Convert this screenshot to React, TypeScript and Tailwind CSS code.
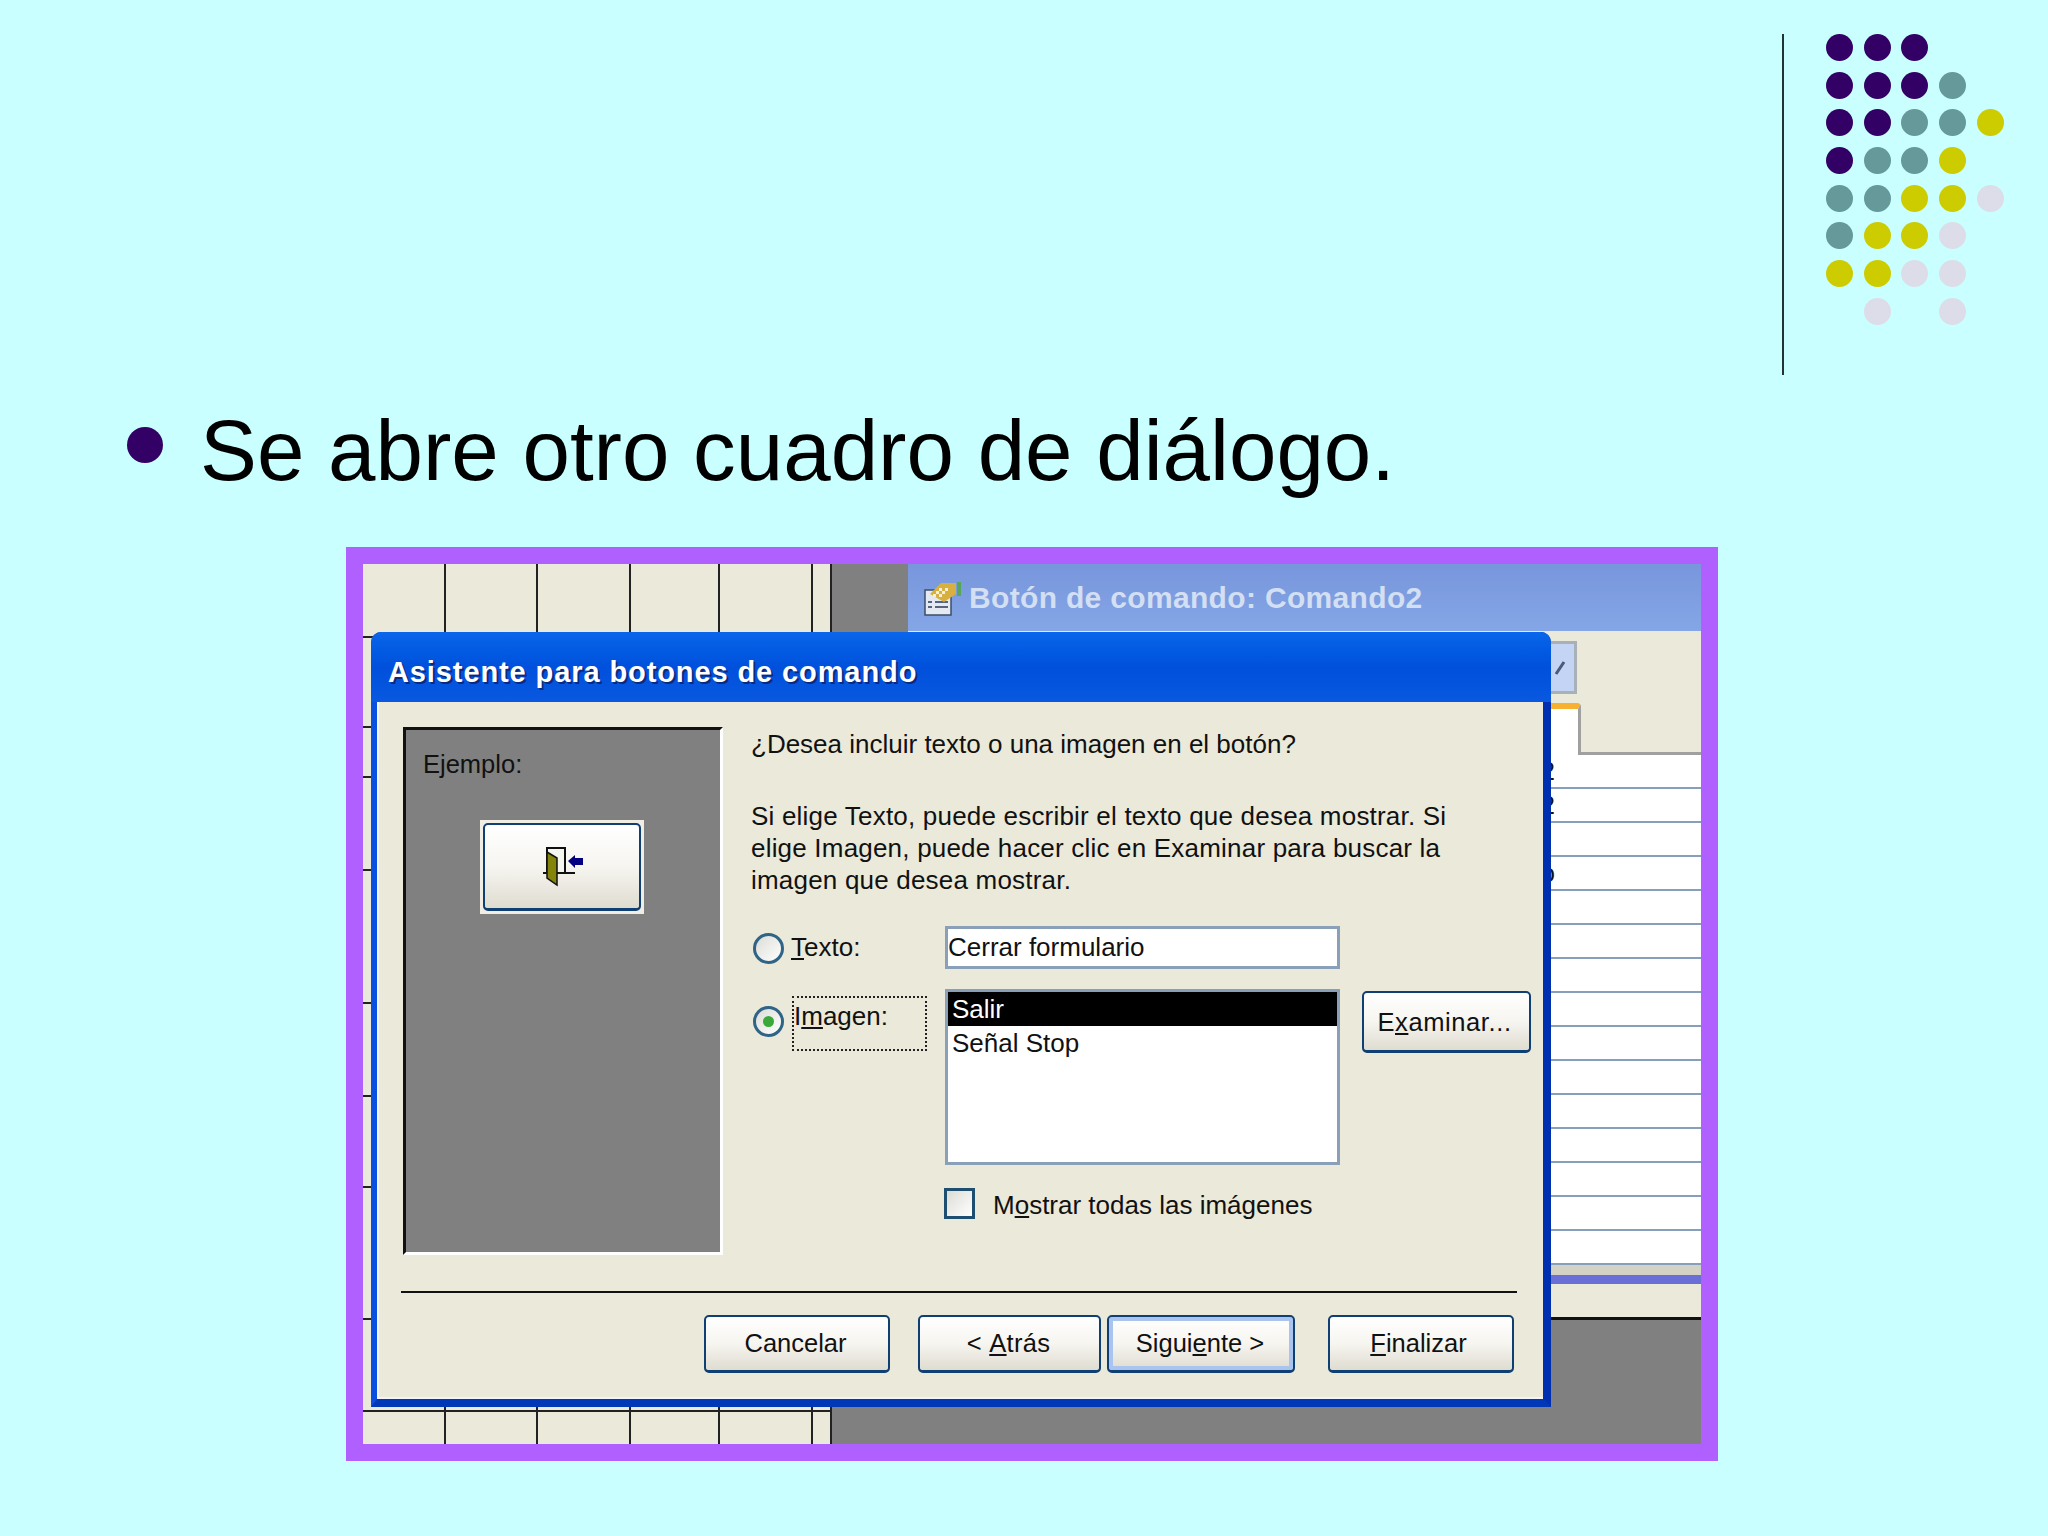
const dotColors: Record<string, string> = {
  p: 'bg-[#330066]',
  t: 'bg-[#669999]',
  y: 'bg-[#cccc00]',
  l: 'bg-[#dddde9]',
};

const dotRows = ['ppp..', 'pppt.', 'pptty', 'ptty.', 'ttyyl', 'tyyl.', 'yyll.', '.l.l.'];

const tableCols = ['w-[83px]', 'w-[92px]', 'w-[93px]', 'w-[89px]', 'w-[93px]', 'w-[19px]'];
const tableRows = ['h-[74px]', 'h-[90px]', 'h-[50px]', 'h-[93px]', 'h-[133px]', 'h-[93px]', 'h-[91px]', 'h-[132px]', 'h-[92px]', 'h-[32px]'];

const propRows = ['2', '2', '', 'o', '', '', '', '', '', '', '', '', '', '', ''];

function Dots() {
  return (
    <div className="grid grid-cols-5 gap-x-[10.67px] gap-y-[10.67px] w-[178px] self-start">
      {dotRows.flatMap((row, r) =>
        row.split('').map((c, i) => (
          <div key={`${r}-${i}`} className={`w-[27px] h-[27px] rounded-full ${c === '.' ? '' : dotColors[c]}`} />
        ))
      )}
    </div>
  );
}

function DoorIcon() {
  return (
    <svg width="40" height="40" viewBox="0 0 40 40">
      <path d="M4 1h18v25H4z" fill="#f6f6f0" stroke="#111" strokeWidth="2" />
      <path d="M4 5l10 6v27L4 31z" fill="#84840a" stroke="#111" strokeWidth="1.5" />
      <path d="M0 26h4M14 26h18" stroke="#111" strokeWidth="2" />
      <path d="M25 14l7-6v3h8v7h-8v3z" fill="#000080" />
    </svg>
  );
}

function FormIcon() {
  return (
    <svg width="38" height="36" viewBox="0 0 38 36">
      <path d="M1 10h26v25H1z" fill="#e4e9f2" stroke="#3d4f68" strokeWidth="1.5" />
      <path d="M4 22h4M11 22h13M4 27h4M11 27h13" stroke="#56657c" strokeWidth="2" />
      <path d="M6 14L17 3h15v11l-12 8z" fill="#d8b040" />
      <path d="M9 14h3v3H9zM15 14h3v3h-3zM12 11h3v3h-3zM18 11h3v3h-3zM15 8h3v3h-3zM21 8h3v3h-3z" fill="#f4f0dc" />
      <path d="M33 2h4v14h-4z" fill="#55a85a" />
    </svg>
  );
}

function XpButton({ children, className = '', focused = false }: { children: React.ReactNode; className?: string; focused?: boolean }) {
  return (
    <div className={`flex items-center justify-center rounded-[5px] border-2 border-b-[3px] border-[#0f3f73] bg-gradient-to-b from-white via-[#f6f5f0] to-[#dfdcd0] text-[25.5px] text-[#111] ${focused ? 'shadow-[inset_0_0_0_4px_#a9c4ee]' : ''} ${className}`}>
      {children}
    </div>
  );
}

function Radio({ checked = false }: { checked?: boolean }) {
  return (
    <div className="flex items-center justify-center w-[31px] h-[31px] rounded-full border-[3px] border-[#2f6487] bg-gradient-to-br from-[#dcdcd6] to-white">
      {checked && <div className="w-[11px] h-[11px] rounded-full bg-[#3aa83a]" />}
    </div>
  );
}

function AccessDialog() {
  return (
    <div className="absolute left-[8px] top-[68px] w-[1180px] h-[775px] flex flex-col rounded-t-[10px] bg-[#0047d0] border-l-[6px] border-l-[#0a50e0] border-r-[8px] border-r-[#0030b0] border-b-[8px] border-b-[#0038b8] font-['Liberation_Sans',sans-serif] text-[#111]">
      <div className="h-[70px] shrink-0 flex items-center -ml-[6px] -mr-[8px] pl-[17px] pt-[12px] rounded-t-[10px] bg-gradient-to-b from-[#0a66ea] via-[#0050dc] to-[#0a58e0]">
        <span className="text-[29px] font-bold text-white tracking-[0.9px] [text-shadow:2px_2px_0_#0a2a80]">Asistente para botones de comando</span>
      </div>
      <div className="flex-1 flex flex-col bg-[#ebe9d9] border-l-[2px] border-b-[2px] border-[#f4f4f8] pl-[24px] pr-[16px]">
        <div className="flex h-[589px] pt-[25px]">
          <div className="w-[320px] h-[528px] shrink-0 bg-[#808080] border-[3px] border-t-[#111] border-l-[#111] border-r-white border-b-white pl-[17px] pt-[15px] text-[25.5px]">
            <div>Ejemplo:</div>
            <div className="mt-[37px] ml-[57px] w-[164px] h-[94px] bg-[#f0eee4] p-[3px]">
              <XpButton className="w-full h-full pl-[2px]">
                <DoorIcon />
              </XpButton>
            </div>
          </div>
          <div className="flex-1 pl-[28px] text-[26px] leading-[32px]">
            <div className="pt-[1px]">¿Desea incluir texto o una imagen en el botón?</div>
            <div className="mt-[40px] tracking-[0.2px]">
              Si elige Texto, puede escribir el texto que desea mostrar. Si
              <br />
              elige Imagen, puede hacer clic en Examinar para buscar la
              <br />
              imagen que desea mostrar.
            </div>
            <div className="mt-[30px] flex items-center h-[43px]">
              <div className="ml-[2px] mt-[2px]"><Radio /></div>
              <div className="ml-[7px] w-[154px] -mt-[2px]"><span className="underline">T</span>exto:</div>
              <div className="w-[395px] h-[43px] flex items-center bg-white border-[3px] border-[#8aa0b8] leading-none pb-[2px]">Cerrar formulario</div>
            </div>
            <div className="mt-[20px] flex items-start">
              <div className="ml-[2px] mt-[17px]"><Radio checked /></div>
              <div className="ml-[8px] mt-[7px] w-[135px] h-[55px] border-2 border-dotted border-[#222] pt-[2px]">
                I<span className="underline">m</span>agen:
              </div>
              <div className="ml-[18px] w-[395px] h-[176px] bg-white border-[3px] border-[#8aa0b8]">
                <div className="h-[34px] bg-black text-white pl-[4px] flex items-center">Salir</div>
                <div className="h-[34px] pl-[4px] flex items-center">Señal Stop</div>
              </div>
              <XpButton className="ml-[22px] mt-[2px] w-[169px] h-[62px] tracking-[0.6px] pr-[4px]">
                E<span className="underline">x</span>aminar...
              </XpButton>
            </div>
            <div className="mt-[20px] flex items-center">
              <div className="ml-[193px] w-[31px] h-[31px] border-[3px] border-[#1f4f70] bg-gradient-to-br from-[#dcdcd6] to-white" />
              <div className="ml-[18px] pt-[4px]">M<span className="underline">o</span>strar todas las imágenes</div>
            </div>
          </div>
        </div>
        <div className="h-[2px] w-[1116px] shrink-0 bg-[#111] -ml-[2px]" />
        <div className="flex mt-[22px] ml-[301px]">
          <XpButton className="w-[186px] h-[58px] pr-[3px]">Cancelar</XpButton>
          <XpButton className="ml-[28px] w-[183px] h-[58px] pr-[2px] tracking-[0.3px]">
            {'<\u00a0'}<span className="underline">A</span>trás
          </XpButton>
          <XpButton focused className="ml-[6px] w-[188px] h-[58px] pr-[2px]">
            Sigui<span className="underline">e</span>nte {'>'}
          </XpButton>
          <XpButton className="ml-[33px] w-[186px] h-[58px] pr-[5px]">
            <span className="underline">F</span>inalizar
          </XpButton>
        </div>
      </div>
    </div>
  );
}

function BackgroundTable() {
  return (
    <div className="w-[469px] h-full flex flex-col bg-[#ebe9d9] shrink-0">
      {tableRows.map((rowHeight, r) => (
        <div key={r} className={`flex ${rowHeight} border-b-2 border-[#222] last:border-b-0`}>
          {tableCols.map((colWidth, c) => (
            <div key={c} className={`${colWidth} border-r-2 border-[#222] ${r === tableRows.length - 1 && c === tableCols.length - 1 ? 'border-r-0' : ''}`} />
          ))}
        </div>
      ))}
    </div>
  );
}

function PropertyWindow() {
  return (
    <div className="flex-1 h-[756px] flex flex-col bg-[#ebe9d9] border-b-[3px] border-[#111] font-['Liberation_Sans',sans-serif]">
      <div className="h-[67px] shrink-0 flex items-center pl-[16px] gap-[7px] bg-gradient-to-b from-[#7896dc] to-[#84a6e6]">
        <FormIcon />
        <span className="text-[30px] font-bold text-[#d3dff2] tracking-[0.33px]">Botón de comando: Comando2</span>
      </div>
      <div className="flex justify-end h-[72px] shrink-0 pr-[124px] pt-[10px]">
        <div className="w-[60px] h-[53px] border-[3px] border-[#a8b0b8] bg-[#c4d4f4] flex items-center justify-end pr-[8px]">
          <svg width="12" height="16" viewBox="0 0 12 16"><path d="M2 14L10 2" stroke="#4a5a78" strokeWidth="3" /></svg>
        </div>
      </div>
      <div className="flex h-[52px] shrink-0">
        <div className="w-[673px] shrink-0 bg-white border-t-[6px] border-[#f8b030] border-r-[3px] border-r-[#a0a0a0] rounded-tr-[4px]" />
        <div className="flex-1 border-b-[3px] border-[#a0a0a0]" />
      </div>
      {propRows.map((label, i) => (
        <div key={i} className="h-[34px] shrink-0 flex items-center justify-end bg-white border-b-2 border-[#86a0bc] text-[26px] text-[#111]">
          <span className="mr-[146px]">{label}</span>
        </div>
      ))}
      <div className="h-[10px] shrink-0 bg-[#d4d2c4]" />
      <div className="h-[9px] shrink-0 bg-[#6a6fd8]" />
    </div>
  );
}

export default function App() {
  return (
    <div className="w-[2048px] h-[1536px] overflow-hidden bg-[#c9ffff] font-['Liberation_Sans',sans-serif] text-black">
      <div className="h-[547px]">
        <div className="flex justify-end pt-[34px] pr-[44px] gap-[42px]">
          <div className="w-[2px] h-[341px] bg-[#223333]" />
          <Dots />
        </div>
        <div className="flex items-center pl-[127px] mt-[30px]">
          <div className="w-[36px] h-[36px] rounded-full bg-[#330066] -mt-[12px]" />
          <div className="ml-[37px] text-[85.3px] leading-[92px]">Se abre otro cuadro de diálogo.</div>
        </div>
      </div>
      <div className="ml-[346px] w-[1372px] h-[914px] border-[17px] border-[#b060ff] bg-[#808080] overflow-hidden relative flex">
        <BackgroundTable />
        <div className="w-[76px] shrink-0" />
        <PropertyWindow />
        <AccessDialog />
      </div>
    </div>
  );
}
